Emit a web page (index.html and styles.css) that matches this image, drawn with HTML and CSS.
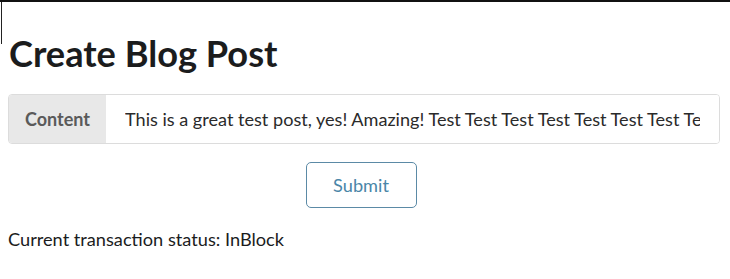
FILE: index.html
```html
<!DOCTYPE html>
<html>
<head>
<meta charset="utf-8">
<link rel="stylesheet" href="styles.css">
</head>
<body>
<div class="page">
  <h1 class="title">Create Blog Post</h1>
  <div class="field">
    <label class="label" for="content">Content</label>
    <input class="input" id="content" type="text" value="This is a great test post, yes! Amazing! Test Test Test Test Test Test Test Test Test">
  </div>
  <div class="actions">
    <button class="submit" type="button">Submit</button>
  </div>
  <p class="status">Current transaction status: InBlock</p>
</div>
</body>
</html>
```
FILE: styles.css
```css
html, body {
  margin: 0;
  padding: 0;
  background: #fff;
}
body {
  font-family: Lato, "Noto Sans", sans-serif;
  color: #1b1c1d;
  border-top: 2px solid #111;
  position: relative;
  height: 277px;
  overflow: hidden;
}
body::before {
  content: "";
  position: absolute;
  left: 1px;
  top: 0;
  width: 1px;
  height: 42px;
  background: #222;
}
.page {
  padding: 0 10px 0 8px;
}
.title {
  margin: 27px 0 0 1px;
  font-size: 36.2px;
  font-weight: 700;
  line-height: 48px;
  color: #1b1c1d;
}
.field {
  margin-top: 17px;
  display: flex;
  height: 48px;
  border: 1px solid #dcdcdc;
  border-radius: 4px;
  overflow: hidden;
}
.label {
  background: #e8e8e8;
  color: #5a5a5a;
  font-weight: 700;
  font-size: 18px;
  width: 97px;
  display: flex;
  align-items: center;
  justify-content: center;
}
.input {
  flex: 1;
  min-width: 0;
  border: 0;
  outline: none;
  margin: 0;
  padding: 0 19px;
  background: #fff;
  font-family: Lato, "Noto Sans", sans-serif;
  font-size: 18.1px;
  color: #2a2a2a;
}
.actions {
  display: flex;
  justify-content: center;
  margin-top: 18px;
}
.submit {
  width: 111px;
  height: 46px;
  border: 1px solid #5b8aa6;
  border-radius: 5px;
  background: #fff;
  color: #4a86a8;
  font-family: Lato, sans-serif;
  font-size: 18.2px;
  margin-right: 6px;
}
.status {
  margin: 20px 0 0 0;
  font-size: 18.2px;
  color: #1b1c1d;
}
```
